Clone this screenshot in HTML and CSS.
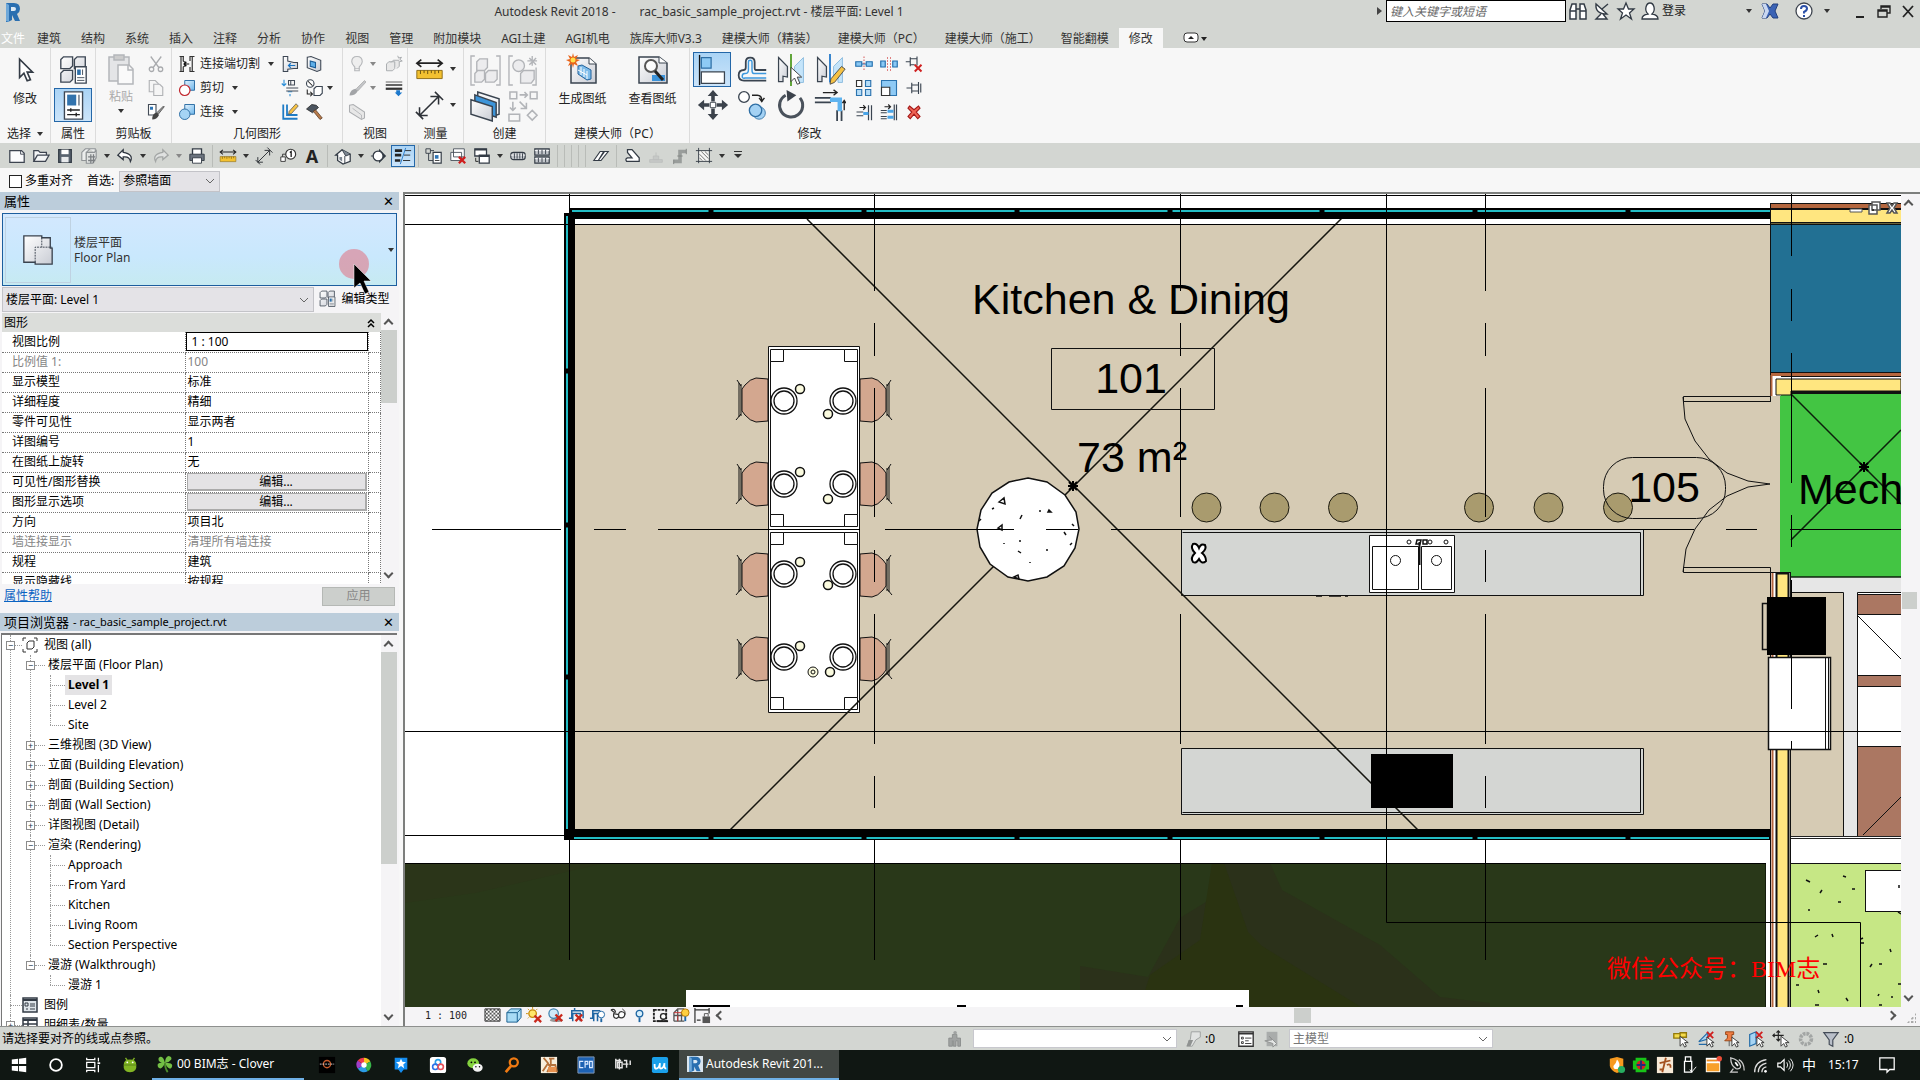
FILE: index.html
```html
<!DOCTYPE html>
<html lang="zh-CN">
<head>
    <meta charset="UTF-8">
    <meta name="viewport" content="width=device-width, initial-scale=1.0">
    <title>Autodesk Revit 2018 - rac_basic_sample_project.rvt</title>
    <link rel="stylesheet" href="styles.css">
</head>

<body>
    <!-- icon sprite -->
    <svg class="sprite" aria-hidden="true">
        <defs>
            <linearGradient id="g-grey" x1="0" y1="0" x2="1" y2="1"><stop offset="0" stop-color="#fff"/><stop offset="1" stop-color="#c9ccd4"/></linearGradient>
            <linearGradient id="g-blue" x1="0" y1="0" x2="1" y2="1"><stop offset="0" stop-color="#e3f3ff"/><stop offset="1" stop-color="#6db6ea"/></linearGradient>
            <pattern id="check" width="4" height="4" patternUnits="userSpaceOnUse"><rect width="4" height="4" fill="#fff"/><path d="M0 0h2v2H0zM2 2h2v2H2z" fill="#555"/></pattern>
        </defs>
        <symbol id="i-revit" viewBox="0 0 16 20"><path d="M1 1h8q6 0 6 6 0 3-3 5l3 7h-5l-3-6v5l-4 2H1z" fill="#2a6fb0"/><path d="M6 5h3q2 0 2 2t-2 2H6z" fill="#dce9f4"/><path d="M1 1l3 2v17l-3-1z" fill="#6ea8d9"/></symbol>
        <symbol id="i-cursor" viewBox="0 0 24 24"><path d="M7 2v17l4-4 3 7 3-1-3-7h5z" fill="#fff" stroke="#333b45" stroke-width="1.5"/></symbol>
        <symbol id="i-types" viewBox="0 0 32 32"><g fill="url(#g-grey)" stroke="#3d4754" stroke-width="1.5"><path d="M2 5l3-3h10v10l-3 3H2zM17 5l3-3h9v10l-3 3h-9zM2 20l3-3h10v10l-3 3H2z"/><path d="M18 13h12v18H18z" fill="#fff"/></g><path d="M20 16h4v6h-4z" fill="#2e6fa8"/><path d="M26 16v6M20 25h8M20 28h8" stroke="#3d4754"/></symbol>
        <symbol id="i-props" viewBox="0 0 32 32"><path d="M6 1h20v30H6z" fill="#fff" stroke="#3d4754" stroke-width="1.5"/><path d="M9 4h10v12H9z" fill="#3273ad"/><path d="M21 4h2v12h-2z" fill="#8a929c"/><path d="M9 21h14M9 26h14M13 19v4M19 24v4" stroke="#222" stroke-width="1.5"/></symbol>
        <symbol id="i-paste" viewBox="0 0 28 32"><g fill="#e4e5e7" stroke="#b4b6ba" stroke-width="1.5"><path d="M2 4h20v24H2z"/><path d="M7 2h10v5H7z" fill="#ccc"/><path d="M11 12h11l4 4v15H11z" fill="#fafafa"/><path d="M21 12v5h5" fill="none"/></g></symbol>
        <symbol id="i-cut" viewBox="0 0 24 24"><g fill="none" stroke="#a9abae" stroke-width="1.7"><path d="M5 2l11 15M19 2L8 17"/><circle cx="6" cy="19" r="3"/><circle cx="18" cy="19" r="3"/></g></symbol>
        <symbol id="i-copy" viewBox="0 0 24 24"><g fill="#f5f5f5" stroke="#b1b3b6" stroke-width="1.5"><path d="M3 2h8l4 4v11H3z"/><path d="M9 7h8l4 4v11H9z"/></g></symbol>
        <symbol id="i-brush" viewBox="0 0 24 24"><path d="M2 2h10v14H2z" fill="#fff" stroke="#444c58" stroke-width="1.5"/><path d="M4 5h4v4H4z" fill="#2e75b5"/><path d="M22 4l-9 9 2 2 8-10z" fill="#999" stroke="#444"/><path d="M13 13q-6 0-6 9 6 0 9-6z" fill="#444"/></symbol>
        <symbol id="i-cope" viewBox="0 0 24 24"><path d="M2 2h6M2 22h6M4 2v20M7 2v6l4 3M7 22v-6l4-3M22 2h-6v6M22 22h-6v-6M19 2v20" fill="none" stroke="#333" stroke-width="1.6"/><path d="M8 12h7M11 9l-3 3 3 3" fill="none" stroke="#111" stroke-width="1.6"/></symbol>
        <symbol id="i-cutgeo" viewBox="0 0 24 24"><path d="M9 2h13v13H9z" fill="url(#g-blue)" stroke="#2f6fa5" stroke-width="1.3"/><circle cx="9" cy="15" r="7" fill="#fff" stroke="#c0262d" stroke-width="1.6"/></symbol>
        <symbol id="i-join" viewBox="0 0 24 24"><path d="M9 2h13v13H9z" fill="url(#g-blue)" stroke="#2f6fa5" stroke-width="1.3"/><circle cx="9" cy="15" r="7" fill="#a5d4f5" stroke="#2f6fa5" stroke-width="1.3"/></symbol>
        <symbol id="i-walljoin" viewBox="0 0 24 24"><path d="M3 2h6v6l8 2h5v8h-5l-8 1v3H3z" fill="url(#g-grey)" stroke="#3c4653" stroke-width="1.4"/><path d="M19 14h-9M13 11l-3 3 3 3" fill="none" stroke="#1573c4" stroke-width="1.6"/></symbol>
        <symbol id="i-opening" viewBox="0 0 24 24"><path d="M3 3l5-1 13 5v13l-5 2L3 17z" fill="url(#g-grey)" stroke="#3c4653" stroke-width="1.4"/><path d="M7 8l7 2v7l-7-2z" fill="#5eaee8" stroke="#185a96" stroke-width="1.4"/></symbol>
        <symbol id="i-beam" viewBox="0 0 24 24"><path d="M4 1v8M1 6l3 3 3-3M12 20v3M9 17h6" stroke="#2d8fd8" stroke-width="1.5" fill="none"/><path d="M10 2h8v6h-8zM13 2v6M7 12h16M7 16h16" stroke="#444c58" fill="none" stroke-width="1.4"/></symbol>
        <symbol id="i-paint" viewBox="0 0 24 24"><g fill="#fff" stroke="#3c4653" stroke-width="1.5"><circle cx="7" cy="6" r="5"/><path d="M12 13l3-3h8v9l-3 3h-8z"/></g><path d="M4 3l6 6M3 14v6h6M7 17l3 3-3 3" stroke="#222" fill="none" stroke-width="1.4"/></symbol>
        <symbol id="i-demo" viewBox="0 0 24 24"><path d="M3 2v19h19M8 2v14h14" stroke="#1f7cc6" stroke-width="2.4" fill="none"/><path d="M20 1l3 3-9 10-4 1 1-4z" fill="#f6c244" stroke="#555"/></symbol>
        <symbol id="i-hammer" viewBox="0 0 24 24"><path d="M2 8l7-6 6 1 3 3-8 7z" fill="#4b545f" stroke="#222"/><path d="M11 11l9 11 3-2-9-11z" fill="#b77a4a" stroke="#5b3a22"/></symbol>
        <symbol id="i-bulb" viewBox="0 0 24 24"><path d="M12 2q7 0 7 7 0 3-4 7v5H9v-5q-4-4-4-7 0-7 7-7z" fill="#eee" stroke="#b5b7ba" stroke-width="1.5"/><path d="M9 18h6" stroke="#b5b7ba"/></symbol>
        <symbol id="i-override" viewBox="0 0 24 24"><g fill="#e8e8e8" stroke="#aaadb0" stroke-width="1.3"><path d="M2 12l3-3h8v9l-3 3H2zM8 10l3-3h8v8l-3 3"/><path d="M17 1l1 3 4-1-2 3 3 2-4 1"/></g></symbol>
        <symbol id="i-brush2" viewBox="0 0 24 24"><path d="M22 2l-11 11 2 3L24 4z" fill="#c3c5c8" stroke="#aaa"/><path d="M10 13q-7 1-8 9 8 0 11-6z" fill="#a2a4a7"/></symbol>
        <symbol id="i-lines" viewBox="0 0 24 24"><path d="M1 4h22" stroke="#333"/><path d="M1 8h22" stroke="#333" stroke-width="2"/><path d="M1 13h22" stroke="#333" stroke-width="3"/><path d="M15 15h5v3h3l-5 5-5-5h2z" fill="#1c78cc"/></symbol>
        <symbol id="i-box" viewBox="0 0 24 24"><path d="M2 3l5-1 15 10v8l-4 2L2 12z" fill="#e7e7e7" stroke="#acaeb1" stroke-width="1.4"/><path d="M6 7l12 9v5" fill="none" stroke="#acaeb1"/></symbol>
        <symbol id="i-measure" viewBox="0 0 32 26"><path d="M2 6h28M7 2L2 6l5 4M25 2l5 4-5 4" fill="none" stroke="#222" stroke-width="1.8"/><path d="M2 14h28v9H2z" fill="#f3c130" stroke="#8a6912"/><path d="M6 14v4M10 14v3M14 14v4M18 14v3M22 14v4M26 14v3" stroke="#5e480c"/></symbol>
        <symbol id="i-dim" viewBox="0 0 32 32"><path d="M5 27L26 6M5 18v9h9M26 15V6h-9M1 23l8 8M22 1l9 9" fill="none" stroke="#2d3137" stroke-width="1.7"/></symbol>
        <symbol id="i-group" viewBox="0 0 32 32"><g fill="#ececee" stroke="#b2b4b8" stroke-width="1.4"><path d="M5 1H1v30h4M27 1h4v30h-4" fill="none"/><path d="M7 7l3-3h8v9l-3 3H7zM5 19l3-3h7v9l-3 3H5zM16 19l3-3h9v9l-3 3h-9z"/></g></symbol>
        <symbol id="i-group2" viewBox="0 0 32 32"><g fill="#ececee" stroke="#b2b4b8" stroke-width="1.4"><path d="M5 1H1v30h4M29 13v18h-4" fill="none"/><circle cx="11" cy="11" r="6"/><path d="M13 19l3-3h11v9l-3 4H13z"/><path d="M25 1v10M20 6h10M22 3l7 7M29 3l-7 7"/></g></symbol>
        <symbol id="i-assembly" viewBox="0 0 32 32"><g stroke="#3a4450" stroke-width="1.5"><path d="M8 1l22 7v16l-3 1L8 12z" fill="#f5f6f8"/><path d="M5 4l22 8v15L5 19z" fill="#3d95da"/><path d="M1 9l22 7v15L1 24z" fill="url(#g-grey)"/></g></symbol>
        <symbol id="i-similar" viewBox="0 0 32 32"><g fill="none" stroke="#b2b4b8" stroke-width="1.6"><path d="M2 1h7v7H2zM23 1h7v7h-7zM1 24h11v7H1zM25 20l5 5-5 5-5-5zM12 4h8M17 1l3 3-3 3M5 11v9M2 17l3 3 3-3M12 11l7 7M19 12v6h-6"/></g></symbol>
        <symbol id="i-sheet" viewBox="0 0 32 32"><path d="M5 5h18l7 6v19H5z" fill="url(#g-grey)" stroke="#3a4450" stroke-width="1.5"/><path d="M23 5v6h7" fill="#fff" stroke="#3a4450"/><path d="M12 13l4-1 9 5v9l-4 1-9-6z" fill="#7dbbe9" stroke="#22629c"/><path d="M15 14v8M18 16v8M21 18v8M12 17l9 5" stroke="#fff"/><path d="M7 0l1 4 4-2-2 4 4 1-4 2 2 4-4-2-1 4-1-4-4 2 2-4-4-2 4-1-2-4 4 2z" fill="#e8641b"/><circle cx="7" cy="7" r="2.5" fill="#ffdf4b"/></symbol>
        <symbol id="i-viewsheet" viewBox="0 0 32 32"><path d="M2 4h20l8 6v20H2z" fill="url(#g-grey)" stroke="#3a4450" stroke-width="1.5"/><path d="M22 4v6h8" fill="#fff" stroke="#3a4450"/><path d="M15 22h13v6H15z" fill="#3b93da"/><circle cx="14" cy="13" r="6" fill="#fff" fill-opacity=".8" stroke="#555" stroke-width="2"/><path d="M18 18l8 9" stroke="#222" stroke-width="3"/></symbol>
        <symbol id="i-align" viewBox="0 0 36 36"><path d="M4 1v34" stroke="#111" stroke-width="1.5"/><path d="M6 4h11v12H6z" fill="#8ecaf5" stroke="#2f6fa5" stroke-width="1.4"/><path d="M6 20h26v13H6z" fill="#fff" stroke="#3a4450" stroke-width="1.4"/></symbol>
        <symbol id="i-offset" viewBox="0 0 36 36"><g fill="none" stroke="#3a4450"><path d="M34 18H22q-1 0-1-3V9q0-5-5-5t-5 5v6q0 3-2 3-6 0-6 6t6 6h25" stroke-width="2"/><path d="M34 22H20q-2 0-2-4V9q0-2-2-2t-2 2v9q0 4-4 4-3 0-3 3t3 2h24" stroke="#3c98de" stroke-width="1.6"/></g></symbol>
        <symbol id="i-mirror1" viewBox="0 0 36 36"><path d="M4 4l10 10v12L9 25v6H4z" fill="url(#g-grey)" stroke="#3a4450" stroke-width="1.4"/><path d="M32 4L22 14v12h5v6h5z" fill="#c4e4fa" stroke="#86b9dd"/><path d="M18 0v36" stroke="#4f9c23" stroke-width="2"/><path d="M18 15v16l4-4 3 7 3-1-3-7h5z" fill="#fff" stroke="#333"/></symbol>
        <symbol id="i-mirror2" viewBox="0 0 36 36"><path d="M4 4l10 10v12L9 25v6H4z" fill="url(#g-grey)" stroke="#3a4450" stroke-width="1.4"/><path d="M32 4L22 14v12h5v6h5z" fill="#c4e4fa" stroke="#86b9dd"/><path d="M18 0v32" stroke="#2278c8" stroke-width="2"/><path d="M31 14l4 3-12 15-5 2 1-6z" fill="#f6c244" stroke="#444"/></symbol>
        <symbol id="i-move" viewBox="0 0 36 36"><path d="M18 1l6 7h-4v6h-4V8h-4zM18 35l6-7h-4v-6h-4v6h-4zM1 18l7-6v4h6v4H8v4zM35 18l-7-6v4h-6v4h6v4z" fill="#3b424b"/><path d="M15 15h6v6h-6z" fill="#fff" stroke="#3b424b"/></symbol>
        <symbol id="i-copy2" viewBox="0 0 36 36"><circle cx="9" cy="9" r="6" fill="#fff" stroke="#3a4450" stroke-width="1.5"/><path d="M18 7h6q5 0 5 6M26 10l3 4 3-4" fill="none" stroke="#222" stroke-width="1.6"/><circle cx="26" cy="27" r="7" fill="#a4d2f4" stroke="#3a77a8"/><circle cx="22" cy="24" r="7" fill="#a4d2f4" stroke="#2f6fa5" stroke-width="1.5"/></symbol>
        <symbol id="i-rotate" viewBox="0 0 36 36"><path d="M12 7A13 13 0 1 0 28 10" fill="none" stroke="#4a525c" stroke-width="3.4"/><path d="M13 1l11 6-10 7z" fill="#3b424b"/></symbol>
        <symbol id="i-trim" viewBox="0 0 36 36"><path d="M1 10h18M1 15h18M26 24v12M31 24v12" stroke="#3a4450" stroke-width="2"/><path d="M18 12h11v13" fill="none" stroke="#5eb3ef" stroke-width="5"/><path d="M10 4h16M22 1l4 3-4 3M34 24v-10M32 16l2-3 2 3" fill="none" stroke="#222" stroke-width="1.5"/></symbol>
        <symbol id="i-split" viewBox="0 0 24 24"><path d="M1 9h8v6H1zM15 9h8v6h-8zM9 12h6" fill="#8ac8f4" stroke="#1f6dac" stroke-width="1.5"/><path d="M12 2v20" stroke="#c22" stroke-dasharray="2 2"/></symbol>
        <symbol id="i-split2" viewBox="0 0 24 24"><path d="M1 8h6v8H1zM17 8h6v8h-6z" fill="#8ac8f4" stroke="#1f6dac" stroke-width="1.5"/><path d="M10 3v18M14 3v18" stroke="#c22" stroke-dasharray="2 2"/></symbol>
        <symbol id="i-pin" viewBox="0 0 24 24"><path d="M2 12h7M9 5v14M9 8h9M9 16h9M18 4v16M21 6v12" fill="none" stroke="#3a4450" stroke-width="1.5"/></symbol>
        <symbol id="i-unpin" viewBox="0 0 24 24"><path d="M1 9h6M7 3v12M7 5h9M7 13h6M16 2v12" fill="none" stroke="#3a4450" stroke-width="1.5"/><path d="M13 13l9 9M22 13l-9 9" stroke="#cf2020" stroke-width="2.6"/></symbol>
        <symbol id="i-array" viewBox="0 0 24 24"><g stroke="#2b73ae" stroke-width="1.5" fill="#b6ddf8"><path d="M2 2h7v8H2z" fill="#fff" stroke="#333"/><path d="M14 2h7v8h-7zM2 14h7v8H2zM14 14h7v8h-7z"/></g></symbol>
        <symbol id="i-scale" viewBox="0 0 24 24"><path d="M2 2h20v20H2z" fill="#8ecaf5" stroke="#2b73ae" stroke-width="1.5"/><path d="M2 11h11v11H2z" fill="#fff" stroke="#333" stroke-width="1.5"/></symbol>
        <symbol id="i-extend" viewBox="0 0 24 24"><path d="M2 12h9M2 17h9M18 3v20M22 3v20" stroke="#3a4450" stroke-width="1.6"/><path d="M11 14h7" stroke="#4aa5e8" stroke-width="4"/><path d="M6 6h8M11 3l3 3-3 3" fill="none" stroke="#222" stroke-width="1.5"/></symbol>
        <symbol id="i-extend2" viewBox="0 0 24 24"><path d="M1 10h8M1 13h8M1 18h8M1 21h8M19 2v21M22 2v21" stroke="#3a4450" stroke-width="1.6"/><path d="M10 11h8M10 19h8" stroke="#4aa5e8" stroke-width="4"/><path d="M6 5h8M11 2l3 3-3 3" fill="none" stroke="#222" stroke-width="1.5"/></symbol>
        <symbol id="i-delete" viewBox="0 0 24 24"><path d="M6 4l6 5 6-5 2 3-5 5 5 6-3 3-5-6-5 6-3-3 5-6-5-5z" fill="#f06455" stroke="#a31818" stroke-width="1.5"/></symbol>
        <!-- quick access -->
        <symbol id="q-new" viewBox="0 0 20 20"><path d="M2 4h13l3 3v10H2z" fill="#fbfbfd" stroke="#3d4450" stroke-width="1.4"/><path d="M14 4v4h4" fill="none" stroke="#3d4450"/></symbol>
        <symbol id="q-open" viewBox="0 0 20 20"><path d="M2 16V4h5l2 2h7v3M2 16l4-7h13l-4 7z" fill="#f4f5f6" stroke="#3d4450" stroke-width="1.4"/></symbol>
        <symbol id="q-save" viewBox="0 0 20 20"><path d="M3 3h14v14H3z" fill="#59636f" stroke="#333b45" stroke-width="1.4"/><path d="M6 3h8v5H6z" fill="#fff"/><path d="M6 11h8v6H6z" fill="#e8eaec"/></symbol>
        <symbol id="q-sync" viewBox="0 0 20 20"><path d="M2 6l4-4h5l-4 4v9H2zM11 2h6v5" fill="#eceeed" stroke="#8f9396" stroke-width="1.2"/><path d="M7 6h9l2-2v8l-4 6H7z" fill="#e1e3e2" stroke="#8f9396" stroke-width="1.2"/><path d="M12 8v10M9 11h8M9 15h8M15 8v10" stroke="#7b7f82" stroke-width="1.4"/></symbol>
        <symbol id="q-undo" viewBox="0 0 20 20"><path d="M8 3L2 9l6 5v-3q7-1 8 5 4-8-8-10z" fill="#fff" stroke="#2f3640" stroke-width="1.4"/></symbol>
        <symbol id="q-redo" viewBox="0 0 20 20"><path d="M12 3l6 6-6 5v-3q-7-1-8 5-4-8 8-10z" fill="#dfe1e0" stroke="#a3a6a5" stroke-width="1.4"/></symbol>
        <symbol id="q-print" viewBox="0 0 20 20"><path d="M5 8V2h10v6" fill="#fff" stroke="#333b45" stroke-width="1.5"/><path d="M2 8h16v7H2z" fill="#6b737e" stroke="#333b45"/><path d="M5 12h10v6H5z" fill="#fff" stroke="#333b45"/></symbol>
        <symbol id="q-tag" viewBox="0 0 20 20"><path d="M2 11h5v5H2z" fill="#fff" stroke="#333"/><path d="M4 11V8h4" fill="none" stroke="#333"/><circle cx="13" cy="8" r="5.5" fill="#fff" stroke="#333" stroke-width="1.3"/><path d="M12 6l1.500-1v6" fill="none" stroke="#111" stroke-width="1.4"/></symbol>
        <symbol id="q-house" viewBox="0 0 20 20"><path d="M2 9l7-6 9 5v8l-8 3-6-4v-6z" fill="#fafafa" stroke="#333b45" stroke-width="1.4"/><path d="M9 3l9 5-5 2z" fill="#7d8792"/><path d="M12 10v8M9 3l4 7 5-2" stroke="#333b45" fill="none"/><path d="M6 11h3v5l-3-2z" fill="#7d8792"/></symbol>
        <symbol id="q-section" viewBox="0 0 20 20"><path d="M10 2l8 8-8 8z" fill="#333b45"/><circle cx="9" cy="10" r="5.500" fill="#fff" stroke="#333b45" stroke-width="1.4"/><path d="M1 10h3" stroke="#333b45"/></symbol>
        <symbol id="q-thin" viewBox="0 0 20 20"><path d="M1 4h8M1 9h7M1 15h6" stroke="#222" stroke-width="3"/><path d="M12 4h7M11 9h7M10 15h8" stroke="#222"/><path d="M13 1L7 19" stroke="#2278c8"/></symbol>
        <symbol id="q-wins" viewBox="0 0 20 20"><path d="M1 2h5v5H1zM4 7v8h5M6 4h4" fill="none" stroke="#333b45"/><path d="M9 6h9v12H9z" fill="#fff" stroke="#333b45" stroke-width="1.3"/><path d="M11 9h4v4h-4z" fill="#2e75b5"/><path d="M11 15h5" stroke="#333"/></symbol>
        <symbol id="q-close" viewBox="0 0 20 20"><g fill="#fff" stroke="#4a515b"><path d="M5 2h12v9H5zM2 6h12v9H2z"/></g><path d="M11 11l7 7M18 11l-7 7" stroke="#cf1d1d" stroke-width="2.500"/></symbol>
        <symbol id="q-switch" viewBox="0 0 20 20"><path d="M2 2h13v8H2z" fill="#fff" stroke="#333b45" stroke-width="1.4"/><path d="M7 9h11v9H7z" fill="#fff" stroke="#333b45" stroke-width="1.4"/><path d="M7 10h11M2 3h13" stroke="#333b45" stroke-width="2"/><path d="M3 12v4h3" fill="none" stroke="#222"/></symbol>
        <symbol id="q-pipe" viewBox="0 0 20 20"><rect x="2" y="6" width="16" height="8" rx="3" fill="#c4c8cd" stroke="#333b45" stroke-width="1.3"/><path d="M2 9h16" stroke="#fff"/><path d="M6 7v6M9 7v6M12 7v6M15 7v6" stroke="#333b45"/></symbol>
        <symbol id="q-pipes" viewBox="0 0 20 20"><path d="M2 2h16v7H2zM2 11h16v7H2z" fill="#c4c8cd" stroke="#333b45" stroke-width="1.3"/><path d="M2 4h16M2 13h16" stroke="#fff"/><path d="M6 3v5M10 3v5M14 3v5M6 12v5M10 12v5M14 12v5" stroke="#333b45"/></symbol>
        <symbol id="q-duct" viewBox="0 0 20 20"><path d="M2 15L9 5h4L7 15zM7 15h3L18 5h-4z" fill="#fff" stroke="#333b45" stroke-width="1.3"/></symbol>
        <symbol id="q-elbow" viewBox="0 0 20 20"><path d="M5 3h5l8 9v4H4q-2-3 1-4h5L5 6z" fill="#fff" stroke="#333b45" stroke-width="1.4"/></symbol>
        <symbol id="q-tee" viewBox="0 0 20 20"><path d="M3 14h14v3H3zM7 10h6v4H7zM10 6v4" fill="#c6c9c7" stroke="#bcbfbd"/></symbol>
        <symbol id="q-flex" viewBox="0 0 20 20"><path d="M3 16h7V5h7" fill="none" stroke="#999d9b" stroke-width="4"/><path d="M3 14v5M17 2v6M7 10h6" stroke="#7f8381"/></symbol>
        <symbol id="q-region" viewBox="0 0 20 20"><path d="M4 1v17M16 1v17M1 4h18M1 16h18" stroke="#333b45"/><path d="M5 5h10v10H5z" fill="#f6f6f6"/><path d="M5 8l7 7M5 12l3 3M7 5l8 8M11 5l4 4" stroke="#666"/></symbol>
        <!-- title bar -->
        <symbol id="t-bino" viewBox="0 0 20 20"><path d="M2 9l2-6h4v15H2zM18 9l-2-6h-4v15h6zM8 8h4M2 10h6M12 10h6" fill="#fff" stroke="#333b45" stroke-width="1.5"/></symbol>
        <symbol id="t-dish" viewBox="0 0 20 20"><path d="M4 3q-1 10 11 10zM9 13l-5 5h11l-4-5M10 8l6-5" fill="#fff" stroke="#333b45" stroke-width="1.4"/></symbol>
        <symbol id="t-star" viewBox="0 0 20 20"><path d="M10 2l2.500 6H18l-4.500 4 2 6-5.500-4-5.500 4 2-6L2 8h5.500z" fill="#fff" stroke="#333b45" stroke-width="1.3"/></symbol>
        <symbol id="t-user" viewBox="0 0 20 20"><path d="M2 18q0-4 6-5-3-3-2-7 1-4 4-4t4 4q1 4-2 7 6 1 6 5z" fill="#fff" stroke="#333b45" stroke-width="1.3"/></symbol>
        <symbol id="t-x" viewBox="0 0 20 20"><path d="M2 3h5l3 4 3-4h5l-3 7 3 7h-5l-3-4-3 4H2l3-7z" fill="#3b63b5" stroke="#23407d"/><path d="M2 3h4l3 7-3 7H2l3-7z" fill="#c9d7f0"/></symbol>
        <symbol id="t-help" viewBox="0 0 20 20"><circle cx="10" cy="10" r="8" fill="#fff" stroke="#3f4650" stroke-width="1.3"/><path d="M7 8q0-3 3-3t3 2.500q0 2-3 3.500v1.500M10 14v2" fill="none" stroke="#2b50a8" stroke-width="2"/></symbol>
        <!-- view control bar -->
        <symbol id="v-detail" viewBox="0 0 18 18"><path d="M1 2h16v13H1z" fill="url(#check)" stroke="#333"/></symbol>
        <symbol id="v-cube" viewBox="0 0 18 18"><path d="M2 6l4-4h11v9l-4 5H2z" fill="#a8dbf5" stroke="#175e8e"/><path d="M2 6h11v10M13 6l4-4" fill="none" stroke="#175e8e"/></symbol>
        <symbol id="v-sun" viewBox="0 0 18 18"><circle cx="7" cy="7" r="4" fill="#ffe76b" stroke="#c78a0a" stroke-width="1.4"/><path d="M7 0v2M0 7h2M2 2l1 1M2 12l1-1M12 2l-1 1" stroke="#c78a0a"/><path d="M9 9l7 7M16 9l-7 7" stroke="#c9281c" stroke-width="2.400"/></symbol>
        <symbol id="v-shadow" viewBox="0 0 18 18"><ellipse cx="10" cy="14" rx="7" ry="2" fill="#999"/><circle cx="7" cy="7" r="5" fill="#cfeafa" stroke="#3d80ad" stroke-width="1.300"/><path d="M9 8l7 7M16 8l-7 7" stroke="#c9281c" stroke-width="2.400"/></symbol>
        <symbol id="v-crop" viewBox="0 0 18 18"><path d="M1 12h3V4h12M5 15V7h8v8M7 1v3M16 4v8" fill="none" stroke="#1f66a3" stroke-width="1.600"/><path d="M8 8l7 7M15 8l-7 7" stroke="#c9281c" stroke-width="2.400"/></symbol>
        <symbol id="v-cropshow" viewBox="0 0 18 18"><path d="M1 12h3V4h8M5 15V7h4v8" fill="none" stroke="#1f66a3" stroke-width="1.600"/><circle cx="13" cy="8" r="3.500" fill="#fff" stroke="#1f66a3"/><path d="M12 12h2v4h-2z" fill="#1f66a3"/></symbol>
        <symbol id="v-glasses" viewBox="0 0 18 18"><path d="M1 3l4 3M1 3q4-2 5 3M4 7q-1 5 3 5 3-1 2-4zM9 8q1-4 4-3 4 1 2 5-3 3-6 0" fill="#fff" stroke="#333" stroke-width="1.300"/><path d="M16 8q1-4-3-6" fill="none" stroke="#333"/></symbol>
        <symbol id="v-bulb" viewBox="0 0 18 18"><circle cx="9" cy="7" r="3.500" fill="#d8effc" stroke="#1f66a3" stroke-width="1.400"/><path d="M8 11h2v5H8z" fill="#1f66a3"/></symbol>
        <symbol id="v-temp" viewBox="0 0 18 18"><path d="M2 3h13v12H2z" fill="none" stroke="#222" stroke-width="2" stroke-dasharray="3 1"/><circle cx="12" cy="10" r="3" fill="#fff" stroke="#222" stroke-width="1.400"/><path d="M5 15h12" stroke="#222" stroke-width="2"/></symbol>
        <symbol id="v-ana" viewBox="0 0 18 18"><path d="M1 15V6l4-4h7M5 2v13M1 9h10M9 5v10M1 15h11" fill="none" stroke="#555" stroke-width="1.400"/><path d="M1 6h8M5 9v6" stroke="#c33"/><circle cx="13" cy="6" r="4" fill="#ffcf40" stroke="#b57600"/><path d="M12 10h2v5h-2z" fill="#1f66a3"/></symbol>
        <symbol id="v-lock" viewBox="0 0 18 18"><path d="M1 1v16M16 1v6M1 3h15M3 14h4" stroke="#333" stroke-width="1.300" fill="none"/><path d="M9 10h8v7H9z" fill="#555"/><path d="M11 10V7h4v3" fill="none" stroke="#555"/></symbol>
        <!-- status bar -->
        <symbol id="s-people" viewBox="0 0 20 20"><path d="M2 18V9h4V5h5v4h4v9h-3v-6h-2v6H7v-6H6v6z" fill="#9fa2a1" stroke="#8a8d8c"/><circle cx="9" cy="3" r="2" fill="#9fa2a1"/></symbol>
        <symbol id="s-edit" viewBox="0 0 20 20"><path d="M7 2h10v6l-5 3-4 7H2l4-8z" fill="#e1e3e2" stroke="#9b9e9d"/><path d="M4 11h5l-3 7H2z" fill="#8f9291"/></symbol>
        <symbol id="s-opt" viewBox="0 0 20 20"><path d="M2 2h16v16H2z" fill="#fff" stroke="#333" stroke-width="1.5"/><path d="M2 4h16" stroke="#333" stroke-width="2"/><path d="M5 8h2v2H5zM5 13h2v2H5zM9 9h7M9 12h4M9 15h7" stroke="#333" fill="none"/></symbol>
        <symbol id="s-add" viewBox="0 0 20 20"><path d="M4 2h12v16H4z" fill="#a9acab"/><path d="M2 12l8-1-3-4 8 8-4 4v-4z" fill="#e4e6e5" stroke="#8d908f"/></symbol>
        <symbol id="s-link" viewBox="0 0 20 20"><path d="M2 4h7v5H2zM9 3h7v5H9z" fill="#f4dc4d" stroke="#93790a" stroke-width="1.500"/><path d="M9 7v11l3-3 2 4 2-1-2-4h4z" fill="#fff" stroke="#333"/></symbol>
        <symbol id="s-under" viewBox="0 0 20 20"><path d="M2 13L12 3v7zM2 16h12" fill="#a7d4f3" stroke="#226aa7" stroke-width="1.300"/><path d="M11 2l7 7M18 2l-7 7" stroke="#cf1d1d" stroke-width="2"/><path d="M11 8v10l3-3 2 4 2-1-2-4h3z" fill="#fff" stroke="#333"/></symbol>
        <symbol id="s-pin" viewBox="0 0 20 20"><path d="M4 2h9v3h-2v4l3 3H3l3-3V5H4z" fill="#ef7c43" stroke="#94400f"/><path d="M8 12v6" stroke="#555"/><path d="M11 8v10l3-3 2 4 2-1-2-4h3z" fill="#fff" stroke="#333"/></symbol>
        <symbol id="s-face" viewBox="0 0 20 20"><path d="M3 5l7-3v13l-7 3z" fill="#a7d4f3" stroke="#226aa7" stroke-width="1.300"/><path d="M10 2l7 7M17 2l-7 7" stroke="#cf1d1d" stroke-width="2"/><path d="M11 8v10l3-3 2 4 2-1-2-4h3z" fill="#fff" stroke="#333"/></symbol>
        <symbol id="s-drag" viewBox="0 0 20 20"><path d="M7 1v11M1 6h12M5 3l2-2 2 2M3 4L1 6l2 2M5 10l2 2 2-2" fill="none" stroke="#222" stroke-width="1.300"/><path d="M10 7v11l3-3 2 4 2-1-2-4h4z" fill="#fff" stroke="#333"/></symbol>
        <symbol id="s-bg" viewBox="0 0 20 20"><circle cx="10" cy="10" r="6" fill="none" stroke="#a2a5a4" stroke-width="4" stroke-dasharray="3 1"/></symbol>
        <symbol id="s-filter" viewBox="0 0 20 20"><path d="M2 3h16l-6 8v7l-4-2v-5z" fill="#b9bfc9" stroke="#444c58" stroke-width="1.300"/></symbol>
    </svg>

    <header class="titlebar">
        <svg class="logo"><use href="#i-revit"/></svg>
        <h1 class="title"><span>Autodesk Revit 2018 -</span><span>rac_basic_sample_project.rvt - 楼层平面: Level 1</span></h1>
        <div class="infocenter">
            <button class="caret-right" aria-label="展开"></button>
            <input class="search" type="text" placeholder="键入关键字或短语" aria-label="搜索">
            <button aria-label="查找"><svg><use href="#t-bino"/></svg></button>
            <button aria-label="通讯中心"><svg><use href="#t-dish"/></svg></button>
            <button aria-label="收藏夹"><svg><use href="#t-star"/></svg></button>
            <button class="login"><svg><use href="#t-user"/></svg>登录</button>
            <i class="caret"></i>
            <button class="exchange" aria-label="Exchange"><svg><use href="#t-x"/></svg></button>
            <button class="help" aria-label="帮助"><svg><use href="#t-help"/></svg></button>
            <i class="caret"></i>
        </div>
        <div class="winbtns">
            <button aria-label="最小化"><svg viewBox="0 0 16 16"><path d="M4 13h8" stroke="#222" stroke-width="2"/></svg></button>
            <button aria-label="还原"><svg viewBox="0 0 16 16"><path d="M5 5V2h9v7h-3M2 6h9v7H2zM2 7h9M5 3h9" fill="none" stroke="#222" stroke-width="1.400"/></svg></button>
            <button aria-label="关闭"><svg viewBox="0 0 16 16"><path d="M3 2l10 11M13 2L3 13" stroke="#222" stroke-width="1.800"/></svg></button>
        </div>
    </header>

    <nav class="tabs">
        <a class="file" href="#">文件</a>
        <a href="#">建筑</a><a href="#">结构</a><a href="#">系统</a><a href="#">插入</a><a href="#">注释</a><a href="#">分析</a><a href="#">协作</a><a href="#">视图</a><a href="#">管理</a><a href="#">附加模块</a><a href="#">AGI土建</a><a href="#">AGI机电</a><a href="#">族库大师V3.3</a><a href="#">建模大师（精装）</a><a href="#">建模大师（PC）</a><a href="#">建模大师（施工）</a><a href="#">智能翻模</a><a class="active" href="#">修改</a>
        <button class="tab-toggle" aria-label="最小化功能区"><svg viewBox="0 0 24 14"><rect x="1" y="2" width="14" height="9" rx="3" fill="#fff" stroke="#333"/><path d="M5 8h6l-3-3z" fill="#222"/><path d="M18 6h6l-3 4z" fill="#222"/></svg></button>
    </nav>

    <section class="ribbon">
        <div class="panel p-select">
            <div class="tools"><button class="big"><svg><use href="#i-cursor"/></svg>修改</button></div>
            <h2>选择 <i class="caret"></i></h2>
        </div>
        <div class="panel p-props">
            <div class="tools stack">
                <button aria-label="类型属性"><svg class="i28"><use href="#i-types"/></svg></button>
                <button class="on" aria-label="属性"><svg class="i28"><use href="#i-props"/></svg></button>
            </div>
            <h2>属性</h2>
        </div>
        <div class="panel p-clip">
            <div class="tools">
                <button class="big off"><svg><use href="#i-paste"/></svg>粘贴<i class="caret"></i></button>
                <div class="col">
                    <button aria-label="剪切"><svg><use href="#i-cut"/></svg></button>
                    <button aria-label="复制"><svg><use href="#i-copy"/></svg></button>
                    <button aria-label="匹配类型"><svg><use href="#i-brush"/></svg></button>
                </div>
            </div>
            <h2>剪贴板</h2>
        </div>
        <div class="panel p-geo">
            <div class="tools">
                <div class="col wide">
                    <button><svg><use href="#i-cope"/></svg>连接端切割<i class="caret"></i></button>
                    <button><svg><use href="#i-cutgeo"/></svg>剪切<i class="caret"></i></button>
                    <button><svg><use href="#i-join"/></svg>连接<i class="caret"></i></button>
                </div>
                <div class="col">
                    <button aria-label="墙连接"><svg><use href="#i-walljoin"/></svg></button>
                    <button aria-label="梁连接"><svg><use href="#i-beam"/></svg></button>
                    <button aria-label="拆分面"><svg><use href="#i-demo"/></svg></button>
                </div>
                <div class="col">
                    <button aria-label="洞口"><svg><use href="#i-opening"/></svg></button>
                    <button aria-label="填色"><svg><use href="#i-paint"/></svg><i class="caret"></i></button>
                    <button aria-label="拆除"><svg><use href="#i-hammer"/></svg></button>
                </div>
            </div>
            <h2>几何图形</h2>
        </div>
        <div class="panel p-view">
            <div class="tools">
                <div class="col">
                    <button aria-label="隐藏"><svg><use href="#i-bulb"/></svg><i class="caret dim"></i></button>
                    <button aria-label="替换"><svg><use href="#i-brush2"/></svg><i class="caret dim"></i></button>
                    <button aria-label="选择框"><svg><use href="#i-box"/></svg></button>
                </div>
                <div class="col">
                    <button aria-label="置换"><svg><use href="#i-override"/></svg></button>
                    <button aria-label="线处理"><svg><use href="#i-lines"/></svg></button>
                </div>
            </div>
            <h2>视图</h2>
        </div>
        <div class="panel p-measure">
            <div class="tools stack">
                <button aria-label="测量"><svg class="i28"><use href="#i-measure"/></svg><i class="caret"></i></button>
                <button aria-label="尺寸标注"><svg class="i28"><use href="#i-dim"/></svg><i class="caret"></i></button>
            </div>
            <h2>测量</h2>
        </div>
        <div class="panel p-create">
            <div class="tools quad">
                <button aria-label="创建组"><svg class="i30"><use href="#i-group"/></svg></button>
                <button aria-label="创建部件"><svg class="i30"><use href="#i-group2"/></svg></button>
                <button aria-label="创建零件"><svg class="i30"><use href="#i-assembly"/></svg></button>
                <button aria-label="创建类似"><svg class="i30"><use href="#i-similar"/></svg></button>
            </div>
            <h2>创建</h2>
        </div>
        <div class="panel p-master">
            <div class="tools">
                <button class="big"><svg><use href="#i-sheet"/></svg>生成图纸</button>
                <button class="big"><svg><use href="#i-viewsheet"/></svg>查看图纸</button>
            </div>
            <h2>建模大师（PC）</h2>
        </div>
        <div class="panel p-modify">
            <div class="tools">
                <div class="eight">
                    <button class="on" aria-label="对齐"><svg><use href="#i-align"/></svg></button>
                    <button aria-label="偏移"><svg><use href="#i-offset"/></svg></button>
                    <button aria-label="镜像拾取轴"><svg><use href="#i-mirror1"/></svg></button>
                    <button aria-label="镜像绘制轴"><svg><use href="#i-mirror2"/></svg></button>
                    <button aria-label="移动"><svg><use href="#i-move"/></svg></button>
                    <button aria-label="复制"><svg><use href="#i-copy2"/></svg></button>
                    <button aria-label="旋转"><svg><use href="#i-rotate"/></svg></button>
                    <button aria-label="修剪"><svg><use href="#i-trim"/></svg></button>
                </div>
                <div class="nine">
                    <button aria-label="拆分图元"><svg><use href="#i-split"/></svg></button>
                    <button aria-label="用间隙拆分"><svg><use href="#i-split2"/></svg></button>
                    <button aria-label="解锁"><svg><use href="#i-unpin"/></svg></button>
                    <button aria-label="阵列"><svg><use href="#i-array"/></svg></button>
                    <button aria-label="缩放"><svg><use href="#i-scale"/></svg></button>
                    <button aria-label="锁定"><svg><use href="#i-pin"/></svg></button>
                    <button aria-label="延伸单个"><svg><use href="#i-extend"/></svg></button>
                    <button aria-label="延伸多个"><svg><use href="#i-extend2"/></svg></button>
                    <button aria-label="删除"><svg><use href="#i-delete"/></svg></button>
                </div>
            </div>
            <h2>修改</h2>
        </div>
    </section>

    <div class="qat">
        <button aria-label="新建"><svg><use href="#q-new"/></svg></button>
        <button aria-label="打开"><svg><use href="#q-open"/></svg></button>
        <button aria-label="保存"><svg><use href="#q-save"/></svg></button>
        <button aria-label="同步"><svg><use href="#q-sync"/></svg></button><i class="caret"></i>
        <button aria-label="放弃"><svg><use href="#q-undo"/></svg></button><i class="caret"></i>
        <button aria-label="重做"><svg><use href="#q-redo"/></svg></button><i class="caret dim"></i>
        <button aria-label="打印"><svg><use href="#q-print"/></svg></button>
        <span class="sep"></span>
        <button aria-label="测量"><svg><use href="#i-measure"/></svg></button><i class="caret"></i>
        <button aria-label="对齐尺寸标注"><svg><use href="#i-dim"/></svg></button>
        <button aria-label="标记"><svg><use href="#q-tag"/></svg></button>
        <button class="letter">A</button>
        <span class="sep"></span>
        <button aria-label="三维视图"><svg><use href="#q-house"/></svg></button><i class="caret"></i>
        <button aria-label="剖面"><svg><use href="#q-section"/></svg></button>
        <button class="on" aria-label="细线"><svg><use href="#q-thin"/></svg></button>
        <span class="sep"></span>
        <button aria-label="用户界面"><svg><use href="#q-wins"/></svg></button>
        <button aria-label="关闭隐藏窗口"><svg><use href="#q-close"/></svg></button>
        <button aria-label="切换窗口"><svg><use href="#q-switch"/></svg></button><i class="caret"></i>
        <button aria-label="管道"><svg><use href="#q-pipe"/></svg></button>
        <button aria-label="平行管道"><svg><use href="#q-pipes"/></svg></button>
        <span class="sep"></span><span class="sep"></span><span class="sep"></span><span class="sep"></span><span class="sep"></span>
        <button aria-label="风管"><svg><use href="#q-duct"/></svg></button>
        <span class="sep"></span>
        <button aria-label="弯头"><svg><use href="#q-elbow"/></svg></button>
        <button aria-label="三通"><svg><use href="#q-tee"/></svg></button>
        <button aria-label="软管"><svg><use href="#q-flex"/></svg></button>
        <button aria-label="区域"><svg><use href="#q-region"/></svg></button><i class="caret"></i>
        <button class="more" aria-label="自定义"><i class="caret"></i></button>
    </div>

    <div class="options">
        <label><input type="checkbox">多重对齐</label>
        <label for="prefer">首选:</label>
        <select id="prefer"><option>参照墙面</option></select>
    </div>

    <main>
        <aside>
            <section class="props">
                <h3>属性<button aria-label="关闭属性">✕</button></h3>
                <button class="type-selector">
                    <span class="thumb"><svg viewBox="0 0 36 36"><path d="M3 3h19v2h9v11h2v17H15v-2H3z" fill="url(#g-grey)" stroke="#39424e" stroke-width="1.400"/><path d="M22 5v10M15 31V15h18" fill="none" stroke="#39424e" stroke-dasharray="2 1"/></svg></span>
                    <span class="type-name">楼层平面<br>Floor Plan</span>
                    <i class="caret"></i>
                </button>
                <div class="instance">
                    <select aria-label="实例"><option>楼层平面: Level 1</option></select>
                    <button><svg><use href="#i-types"/></svg>编辑类型</button>
                </div>
                <div class="plist">
                    <div class="prows">
                        <div class="group">图形<svg viewBox="0 0 8 10"><path d="M1 5l3-3 3 3M1 9l3-3 3 3" fill="none" stroke="#000" stroke-width="1.500"/></svg></div>
                        <table>
                            <tr><th>视图比例</th><td><input type="text" value="1 : 100" aria-label="视图比例"></td><td></td></tr>
                            <tr class="dim"><th>比例值 1:</th><td>100</td><td></td></tr>
                            <tr><th>显示模型</th><td>标准</td><td></td></tr>
                            <tr><th>详细程度</th><td>精细</td><td></td></tr>
                            <tr><th>零件可见性</th><td>显示两者</td><td></td></tr>
                            <tr><th>详图编号</th><td>1</td><td></td></tr>
                            <tr><th>在图纸上旋转</th><td>无</td><td></td></tr>
                            <tr><th>可见性/图形替换</th><td><button>编辑...</button></td><td></td></tr>
                            <tr><th>图形显示选项</th><td><button>编辑...</button></td><td></td></tr>
                            <tr><th>方向</th><td>项目北</td><td></td></tr>
                            <tr class="dim"><th>墙连接显示</th><td>清理所有墙连接</td><td></td></tr>
                            <tr><th>规程</th><td>建筑</td><td></td></tr>
                            <tr><th>显示隐藏线</th><td>按规程</td><td></td></tr>
                        </table>
                    </div>
                    <div class="vscroll"><i class="up"></i><b class="thumb-props"></b><i class="down"></i></div>
                </div>
                <div class="pfoot"><a href="#">属性帮助</a><button disabled>应用</button></div>
                <svg class="pointer" viewBox="0 0 34 46"><circle cx="15" cy="15" r="15" fill="#db8f9f" fill-opacity=".75"/><path d="M15 15v24l6-5 5 11 4-2-5-11h7z" fill="#000" stroke="#fff" stroke-width=".5"/></svg>
            </section>

            <section class="browser">
                <h3><span>项目浏览器</span><small>- rac_basic_sample_project.rvt</small><button aria-label="关闭浏览器">✕</button></h3>
                <div class="btree">
                    <ul>
                        <li><div class="row"><button class="tg">−</button><i class="dash"></i><svg class="ticon" viewBox="0 0 16 16"><path d="M1 4V1h3M12 1h3v3M15 12v3h-3M4 15H1v-3" fill="none" stroke="#333"/><path d="M5 6l2-2h5v6l-2 2H5z" fill="#fff" stroke="#333"/></svg>视图 (all)</div>
                            <ul>
                                <li><div class="row"><button class="tg">−</button><i class="dash"></i>楼层平面 (Floor Plan)</div>
                                    <ul>
                                        <li><div class="row leaf"><i class="dash"></i><b>Level 1</b></div></li>
                                        <li><div class="row leaf"><i class="dash"></i>Level 2</div></li>
                                        <li><div class="row leaf"><i class="dash"></i>Site</div></li>
                                    </ul>
                                </li>
                                <li><div class="row"><button class="tg">+</button><i class="dash"></i>三维视图 (3D View)</div></li>
                                <li><div class="row"><button class="tg">+</button><i class="dash"></i>立面 (Building Elevation)</div></li>
                                <li><div class="row"><button class="tg">+</button><i class="dash"></i>剖面 (Building Section)</div></li>
                                <li><div class="row"><button class="tg">+</button><i class="dash"></i>剖面 (Wall Section)</div></li>
                                <li><div class="row"><button class="tg">+</button><i class="dash"></i>详图视图 (Detail)</div></li>
                                <li><div class="row"><button class="tg">−</button><i class="dash"></i>渲染 (Rendering)</div>
                                    <ul>
                                        <li><div class="row leaf"><i class="dash"></i>Approach</div></li>
                                        <li><div class="row leaf"><i class="dash"></i>From Yard</div></li>
                                        <li><div class="row leaf"><i class="dash"></i>Kitchen</div></li>
                                        <li><div class="row leaf"><i class="dash"></i>Living Room</div></li>
                                        <li><div class="row leaf"><i class="dash"></i>Section Perspective</div></li>
                                    </ul>
                                </li>
                                <li><div class="row"><button class="tg">−</button><i class="dash"></i>漫游 (Walkthrough)</div>
                                    <ul>
                                        <li><div class="row leaf"><i class="dash"></i>漫游 1</div></li>
                                    </ul>
                                </li>
                            </ul>
                        </li>
                        <li><div class="row leaf top"><i class="dash"></i><svg class="ticon" viewBox="0 0 16 16"><path d="M1 1h14v14H1z" fill="#dfe5ea" stroke="#333b45" stroke-width="1.500"/><path d="M1 3h14" stroke="#333b45" stroke-width="2"/><path d="M3 6h3v3H3zM8 7h5M8 9h5M4 12h2M8 12h5" stroke="#333b45" fill="none"/></svg>图例</div></li>
                        <li><div class="row"><button class="tg">+</button><i class="dash"></i><svg class="ticon" viewBox="0 0 16 16"><path d="M1 1h14v14H1zM1 7h14M6 4v11" fill="#fff" stroke="#333b45" stroke-width="1.500"/><path d="M1 3h14" stroke="#333b45" stroke-width="2"/></svg>明细表/数量</div></li>
                    </ul>
                    <div class="vscroll"><i class="up"></i><b class="thumb-tree"></b><i class="down"></i></div>
                </div>
            </section>
        </aside>

        <section class="view">
            <div class="canvas">
                <svg class="plan">
                    <defs>
                        <g id="chair"><path d="M26 -21L14 -22Q8 -21 3 -15L0 -11V11L3 15Q8 21 14 22L26 21z" fill="#d3a78f" stroke="#111"/><path d="M-1 -16V16M-3 -17V17M-5 -20l4 6M-6 20l5-6" stroke="#111" fill="none"/></g>
                        <g id="plate" fill="#fff" stroke="#111" stroke-width="1.300"><circle r="13"/><circle r="10"/></g>
                        <g id="star" stroke="#000" stroke-width="2"><path d="M-5 0H5M0-5V5M-4-4L4 4M4-4L-4 4"/></g>
                    </defs>
                    <!-- model coordinates are offset so the sheet starts at the canvas corner -->
                    <g transform="translate(-405 -194)">
                        <rect x="405" y="194" width="1496" height="813" fill="#fff"/>
                        <!-- terrain -->
                        <rect x="405" y="863" width="1361" height="144" fill="#293819"/>
                        <path d="M1224 863H1270L1282 890 1380 945 1440 997 1490 1003V1007H1080V966L1148 977 1180 918 1206 902z" fill="#2b311a"/>
                        <path d="M1212 863H1224L1248 932 1262 946 1361 1007H1140L1150 975 1200 940z" fill="#2a3311"/>
                        <path d="M405 863h200l-130 30-70 10z" fill="#2b3519"/>
                        <path d="M405 863.500h1361v144" fill="none" stroke="#000"/>
                        <rect x="686" y="990" width="563" height="17" fill="#fff"/>
                        <path d="M693 1006h37M957 1006h9M1236 1006h7" stroke="#000" stroke-width="2"/>
                        <!-- kitchen floor -->
                        <rect x="575" y="224" width="1206" height="606" fill="#d6cbb4"/>
                        <rect x="1790" y="592" width="53" height="244" fill="#d6cbb4"/>
                        <!-- chairs and tables -->
                        <use href="#chair" x="742" y="400"/><use href="#chair" x="742" y="484"/><use href="#chair" x="742" y="575"/><use href="#chair" x="742" y="659"/>
                        <g transform="matrix(-1 0 0 1 1628 0)"><use href="#chair" x="742" y="400"/><use href="#chair" x="742" y="484"/><use href="#chair" x="742" y="575"/><use href="#chair" x="742" y="659"/></g>
                        <g fill="#fff" stroke="#111">
                            <path d="M768.500 346.500h91v366h-91zM770.500 349.500h87v177h-87zM770.500 532.500h87v177h-87z"/>
                            <path d="M770.500 361.500h13v-12M857.500 361.500h-13v-12M770.500 514.500h13v12M857.500 514.500h-13v12M770.500 544.500h13v-12M857.500 544.500h-13v-12M770.500 697.500h13v12M857.500 697.500h-13v12"/>
                        </g>
                        <use href="#plate" x="784" y="401"/><use href="#plate" x="843" y="401"/>
                        <use href="#plate" x="784" y="484"/><use href="#plate" x="843" y="484"/>
                        <use href="#plate" x="784" y="574"/><use href="#plate" x="843" y="574"/>
                        <use href="#plate" x="784" y="657"/><use href="#plate" x="843" y="657"/>
                        <g fill="#fbfbdf" stroke="#111" stroke-width="1.500"><circle cx="800" cy="389" r="4.500"/><circle cx="800" cy="472" r="4.500"/><circle cx="800" cy="562" r="4.500"/><circle cx="800" cy="646" r="4.500"/><circle cx="828" cy="414" r="4.500"/><circle cx="828" cy="499" r="4.500"/><circle cx="828" cy="585" r="4.500"/><circle cx="830" cy="672" r="4.500"/><circle cx="813" cy="672" r="5" stroke-width="1"/><circle cx="813" cy="672" r="2" stroke-width="1"/></g>
                        <!-- counters -->
                        <g stroke="#111">
                            <path d="M1181.500 529.500h462v66h-462z" fill="#d4d6d3"/><path d="M1182.500 532.500h458v63" fill="none"/>
                            <path d="M1181.500 748.500h462v66h-462z" fill="#d4d6d3"/><path d="M1182.500 812.500h458v-64" fill="none"/>
                            <path d="M1369.500 535.500h85v57h-85zM1372.500 546.500h46v43h-46zM1421.500 546.500h30v43h-30z" fill="#fff"/>
                            <circle cx="1395.500" cy="560.500" r="5" fill="#fff"/><circle cx="1436.500" cy="560.500" r="5" fill="#fff"/>
                            <circle cx="1409" cy="542" r="2" fill="#fff"/><circle cx="1446" cy="542" r="2" fill="#fff"/>
                            <path d="M1417 540h4l-1 4h-4zM1423 540h4v4h-4z" fill="#fff" stroke-width="1.500"/><circle cx="1430" cy="542" r="2" fill="#fff"/><path d="M1419.500 542v23" fill="none" stroke-width="2"/>
                            <path d="M1193 544q4-1 6 4 2-5 6-3 2 4-3 8 4 3 4 8-4 4-7-2-3 5-6 3-3-4 2-9-5-5-2-9z" fill="#fff" stroke="#000" stroke-width="2"/>
                            <path d="M1316 596h6M1329 596h12M1345 596h3" stroke-width="1.500"/>
                        </g>
                        <!-- room cross lines -->
                        <path d="M807 219L1418 830M1342 218L730 830" stroke="#15150f" stroke-width="1.500"/>
                        <rect x="1371" y="754" width="82" height="54"/>
                        <!-- planter -->
                        <path d="M1028 478l19 4 18 13 11 17 3 17-4 19-11 18-17 11-19 4-20-4-18-13-10-17-3-18 4-19 11-17 17-11z" fill="#fff" stroke="#111" stroke-width="1.500"/>
                        <path d="M999 502l5-4 1 6zM998 528l4-3v5zM1014 577l4-2 1 4zM1040 510v2M1049 510l2 2h-3zM1022 515l-2 4M981 519l-2 2M1072 524l2 2M1064 532l2 3M1020 540v2M1018 551l3 2M1046 550h2M1030 562v1M994 508l-2 1M1072 543l-2 2M1004 543v1" fill="none" stroke="#111" stroke-width="1.500"/>
                        <g fill="#a99b6e" stroke="#1c1a10"><circle cx="1206.500" cy="507.500" r="14.500"/><circle cx="1274.500" cy="507.500" r="14.500"/><circle cx="1343" cy="507.500" r="14.500"/><circle cx="1479" cy="507.500" r="14.500"/><circle cx="1548.500" cy="507.500" r="14.500"/><circle cx="1618" cy="507.500" r="14.500"/></g>
                        <!-- curtain walls -->
                        <path d="M569 208h1202v11H569z"/>
                        <path d="M572 211h1198" stroke="#22bcc4" stroke-width="2"/>
                        <path d="M564 213h11v626h-11z"/><path d="M567 216v620" stroke="#22bcc4" stroke-width="2"/>
                        <path d="M564 829h1207v11H564z"/><path d="M574 838h1195" stroke="#22bcc4" stroke-width="2"/>
                        <path d="M711 209v4M864 209v4M1017 209v4M1170 209v4M1322 209v4M1475 209v4M1628 209v4M711 836v4M864 836v4M1017 836v4M1170 836v4M1322 836v4M1475 836v4M1628 836v4M565 371h4M565 525h4M565 677h4" stroke="#000" stroke-width="5"/>
                        <!-- neighbouring rooms -->
                        <rect x="1771" y="225" width="130" height="148" fill="#227093"/>
                        <path d="M1771 204h130v4h-130zM1771 373h130v3h-130z" fill="#b5673f"/>
                        <path d="M1771 210h130v12h-130z" fill="#ffe680"/>
                        <path d="M1770 203.500h131M1771 208.500h130M1771 209.500h130M1771 222.500h130M1771 224.500h130M1770.500 203v199M1771 372.500h130M1771 376.500h130" stroke="#111" fill="none"/>
                        <path d="M1771 223.500h130" stroke="#6b6439"/>
                        <rect x="1780" y="394" width="121" height="183" fill="#43c543"/>
                        <path d="M1771 376h10v20h-10z" fill="#fff"/><path d="M1776 379h125v12h-110v4h-15z" fill="#ffe680" stroke="#111"/><path d="M1791 392.500h110" stroke="#111" stroke-width="3"/>
                        <path d="M1771.500 375v21" stroke="#b5673f" stroke-width="2"/>
                        <path d="M1791 394L1901 504M1791 540L1901 430M1780 577h121" stroke="#0c200c" stroke-width="1.500"/>
                        <path d="M1791 578h110v14h-110zM1844 578h14v258h-14z" fill="#e6e6e6"/>
                        <path d="M1858 594h43v21h-43zM1858 676h43v10h-43zM1858 747h43v89h-43z" fill="#ab7762"/>
                        <path d="M1791 592.500h52.500V836M1857.500 836V592.500H1901M1858 594.500h43M1858 614.500h43M1858 675.500h43M1858 686.500h43M1858 746.500h43M1858 616l43 43M1901 797l-38 38" stroke="#111" fill="none"/>
                        <path d="M1791 836.500h110M1791 838.500h110" stroke="#222"/>
                        <!-- garden -->
                        <rect x="1791" y="863" width="110" height="144" fill="#c6e785"/>
                        <path d="M1791 863.500h110" stroke="#111"/>
                        <rect x="1865.500" y="870.500" width="40" height="41" fill="#fff" stroke="#111"/>
                        <path d="M1815 937l3-2M1832 934l1 3M1838 902h3M1890 949l1 3M1823 964h4M1879 964h3M1870 967l2-3M1796 985h3M1818 990l1 3M1846 998l2 3M1815 1005h4M1878 996l1-2M1892 996v2M1879 1005h3M1861 943h3M1806 880l4 2M1843 876l3 1M1822 890l-2 3M1852 889h3M1861 939l2-1M1808 910h2M1898 912l3 2M1898 984h3M1899 885v3" stroke="#111" stroke-width="1.500" fill="none"/>
                        <!-- partition -->
                        <path d="M1766 863h5v144h-5z" fill="#fff"/>
                        <path d="M1771 573h20v434h-20z" fill="#fff"/><path d="M1776.500 573.500h12V1008h-12z" fill="#ffe680" stroke="#111" stroke-width="2"/>
                        <path d="M1772.500 573v434" stroke="#b5673f" stroke-width="2"/><path d="M1770.500 568v439M1790.500 573v434M1770 572.500h21" stroke="#111"/>
                        <!-- fridge and wash unit -->
                        <path d="M1762.500 603.500h5v46h-5z" fill="#d6cbb4" stroke="#111" stroke-width="1.500"/>
                        <rect x="1767" y="597" width="59" height="58"/>
                        <path d="M1768.500 657.500h62v92h-62z" fill="#fff" stroke="#111" stroke-width="1.500"/><path d="M1825.500 658v91M1828.500 658v91" stroke="#111"/>
                        <!-- double door -->
                        <path d="M1683.500 396.500h87v5h-87zM1683.500 567.500h87v5h-87z" fill="#d6cbb4" stroke="#111"/>
                        <path d="M1683 397l2 22 10 22 14 18 18 14 21 8 22 3-22 3-21 9-18 14-14 19-9 20-3 23" fill="none" stroke="#111"/>
                        <!-- grids -->
                        <path d="M405 195.500h1496M405 224.500h1365M405 835.500h160M405 731.500h1496" stroke="#000"/>
                        <path d="M432 529.500h129M594 529.500h32M658 529.500h202M885 529.500h129M1046 529.500h32M1111 529.500h583M1726 529.500h31M1790 529.500h111" stroke="#000"/>
                        <path d="M569.500 194v766M1386.500 194v728.500h474V1007" fill="none" stroke="#000"/>
                        <path d="M874.500 194v97M874.500 323v33M874.500 388v129M874.500 550v32M874.500 614v130M874.500 776v32M874.500 840v120" stroke="#000"/>
                        <path d="M1180.500 194v97M1180.500 323v33M1180.500 388v129M1180.500 614v130M1180.500 840v120" stroke="#000"/>
                        <path d="M1485.500 194v97M1485.500 323v33M1485.500 388v129M1485.500 550v32M1485.500 614v130M1485.500 776v32M1485.500 840v120" stroke="#000"/>
                        <path d="M1791.500 194v62M1791.500 289v32M1791.500 353v130M1791.500 515v32M1791.500 580v129M1791.500 741v8" stroke="#000"/>
                        <use href="#star" x="1073" y="486"/><use href="#star" x="1864" y="467"/>
                        <!-- room tags -->
                        <path d="M1051.500 348.500h163v61h-163z" fill="none" stroke="#111"/>
                        <rect x="1603.500" y="457.500" width="122" height="61" rx="29" fill="none" stroke="#111"/>
                        <g class="tag">
                            <text x="1131" y="314" text-anchor="middle">Kitchen &amp; Dining</text>
                            <text x="1131" y="393" text-anchor="middle">101</text>
                            <text x="1132" y="472" text-anchor="middle">73 m²</text>
                            <text x="1664" y="502" text-anchor="middle">105</text>
                            <text x="1798" y="504">Mech</text>
                        </g>
                        <text class="watermark" x="1607" y="977">微信公众号：BIM志</text>
                    </g>
                </svg>
                <div class="mdi">
                    <button aria-label="最小化视图"><svg viewBox="0 0 14 14"><path d="M1 8h12v3H1z" fill="#fff" stroke="#555"/></svg></button>
                    <button aria-label="还原视图"><svg viewBox="0 0 14 14"><path d="M5 1h8v8H5zM2 4h8v9H2z" fill="#fff" stroke="#555" stroke-width="1.500"/><path d="M5 8h2v2H5z" fill="#333"/></svg></button>
                    <button aria-label="关闭视图"><svg viewBox="0 0 14 14"><path d="M2 2h3l2 3 2-3h3L9 7l3 5H9L7 9l-2 3H2l3-5z" fill="#fff" stroke="#555" stroke-width="1.500"/></svg></button>
                </div>
            </div>
            <div class="vscroll vs-canvas"><i class="up"></i><b></b><i class="down"></i></div>
            <div class="viewbar">
                <button class="scale">1 : 100</button>
                <button aria-label="详细程度"><svg><use href="#v-detail"/></svg></button>
                <button aria-label="视觉样式"><svg><use href="#v-cube"/></svg></button>
                <button aria-label="日光路径"><svg><use href="#v-sun"/></svg></button>
                <button aria-label="阴影"><svg><use href="#v-shadow"/></svg></button>
                <button aria-label="裁剪视图"><svg><use href="#v-crop"/></svg></button>
                <button aria-label="显示裁剪区域"><svg><use href="#v-cropshow"/></svg></button>
                <button aria-label="临时隐藏"><svg><use href="#v-glasses"/></svg></button>
                <button aria-label="显示隐藏图元"><svg><use href="#v-bulb"/></svg></button>
                <button aria-label="临时视图属性"><svg><use href="#v-temp"/></svg></button>
                <button aria-label="分析模型"><svg><use href="#v-ana"/></svg></button>
                <button aria-label="显示约束"><svg><use href="#v-lock"/></svg></button>
                <div class="hscroll"><i class="left"></i><b></b><i class="right"></i></div>
            </div>
            <div class="grip"></div>
        </section>
    </main>

    <footer class="status">
        <p>请选择要对齐的线或点参照。</p>
        <div class="worksets">
            <svg><use href="#s-people"/></svg>
            <select disabled aria-label="工作集"><option></option></select>
            <svg><use href="#s-edit"/></svg><span class="count">:0</span>
            <svg><use href="#s-opt"/></svg>
            <svg><use href="#s-add"/></svg>
            <select disabled aria-label="设计选项"><option>主模型</option></select>
        </div>
        <div class="selects">
            <button aria-label="选择链接"><svg><use href="#s-link"/></svg></button>
            <button aria-label="选择基线图元"><svg><use href="#s-under"/></svg></button>
            <button aria-label="选择锁定图元"><svg><use href="#s-pin"/></svg></button>
            <button aria-label="按面选择图元"><svg><use href="#s-face"/></svg></button>
            <button aria-label="选择时拖拽图元"><svg><use href="#s-drag"/></svg></button>
            <button aria-label="后台进程"><svg><use href="#s-bg"/></svg></button>
            <button aria-label="过滤器"><svg><use href="#s-filter"/></svg></button>
            <span>:0</span>
        </div>
    </footer>

    <footer class="taskbar">
        <div class="pins">
            <button aria-label="开始"><svg viewBox="0 0 20 20"><path d="M2 4l7-1v6H2zM10 3l8-1v7h-8zM2 11h7v6l-7-1zM10 11h8v7l-8-1z" fill="#fff"/></svg></button>
            <button aria-label="Cortana"><svg viewBox="0 0 20 20"><circle cx="10" cy="10" r="6.500" fill="none" stroke="#fff" stroke-width="2"/></svg></button>
            <button aria-label="任务视图"><svg viewBox="0 0 20 20"><path d="M3 2v2h9V2M3 7h9v6H3zM3 18v-2h9v2M16 2v4M16 10v8" fill="none" stroke="#fff" stroke-width="1.400"/><path d="M15 7h3v2h-3z" fill="#fff"/></svg></button>
            <button aria-label="Android"><svg viewBox="0 0 20 20"><path d="M3 10q0-6 7-6t7 6q1 8-7 8t-7-8z" fill="#82b524"/><path d="M5 2l2 3M15 2l-2 3" stroke="#82b524" stroke-width="1.500"/><path d="M3 10h14" stroke="#55801a"/><circle cx="7" cy="7" r="1" fill="#fff"/><circle cx="13" cy="7" r="1" fill="#fff"/></svg></button>
        </div>
        <button class="task"><svg viewBox="0 0 20 20"><g fill="#73bf45"><path d="M10 9Q8 1 5 2 2 3 3 6q2 3 7 3zM10 9q0-7 4-8 4 1 3 4-2 3-7 4zM10 9Q4 8 2 10q-1 4 3 5 3-1 5-6zM10 9q7-1 8 2 0 4-3 4-3-1-5-6z"/></g><path d="M10 9q0 6 3 10" fill="none" stroke="#4c8c2a" stroke-width="2"/></svg>00 BIM志 - Clover</button>
        <div class="pins apps">
            <button aria-label="AMD"><svg viewBox="0 0 20 20"><path d="M1 1h18v18H1z" fill="#000"/><circle cx="10" cy="9" r="4" fill="none" stroke="#c65a2b" stroke-width="1.500"/><path d="M2 9h16" stroke="#ddd" stroke-dasharray="2 1"/></svg></button>
            <button aria-label="浏览器"><svg viewBox="0 0 20 20"><path d="M10 2a8 8 0 0 1 7 4l-7 4z" fill="#f6c21c"/><path d="M17 6a8 8 0 0 1-3 11l-4-7z" fill="#38b54a"/><path d="M14 17a8 8 0 0 1-11-3l7-4z" fill="#2b9be6"/><path d="M3 14a8 8 0 0 1 0-9l7 5z" fill="#a13ec9"/><path d="M3 5a8 8 0 0 1 7-3v8z" fill="#ee3a4c"/><circle cx="10" cy="10" r="3" fill="#fff"/></svg></button>
            <button aria-label="书签"><svg viewBox="0 0 20 20"><path d="M3 2h14v13h-4l-3 4-3-4H3z" fill="#148df0"/><path d="M10 3l1.500 3.500 4 .5-3 2.500 1 4L10 11l-3.500 2.500 1-4-3-2.500 4-.5z" fill="#fff"/></svg></button>
            <button aria-label="云盘"><svg viewBox="0 0 20 20"><rect x="1" y="1" width="18" height="18" rx="3" fill="#fff"/><g fill="none" stroke-width="1.800"><circle cx="10" cy="7" r="3" stroke="#2aa1e8"/><circle cx="7" cy="12" r="3" stroke="#2a72e8"/><circle cx="13" cy="12" r="3" stroke="#e8505a"/></g></svg></button>
            <button aria-label="微信"><svg viewBox="0 0 20 20"><ellipse cx="8" cy="8" rx="6.500" ry="5.500" fill="#84d23e"/><ellipse cx="13" cy="13" rx="5.500" ry="4.500" fill="#f4f4f4"/><circle cx="6" cy="7" r="1"/><circle cx="10" cy="7" r="1"/><circle cx="11" cy="12" r=".8"/><circle cx="15" cy="12" r=".8"/></svg></button>
            <button aria-label="搜索"><svg viewBox="0 0 20 20"><circle cx="12" cy="7" r="4.500" fill="none" stroke="#f07a12" stroke-width="2.500"/><path d="M9 11l-6 7" stroke="#f07a12" stroke-width="3"/></svg></button>
            <button aria-label="工具"><svg viewBox="0 0 20 20"><path d="M1 1h18v18H1z" fill="#f7eedc"/><path d="M4 2l5 6-6 9M10 3h6M12 3v7l-4 8M9 10h8l2 8" stroke="#b4713a" stroke-width="2" fill="none"/><path d="M9 12h9v6H9z" fill="#e9924f"/></svg></button>
            <button aria-label="CAD"><svg viewBox="0 0 20 20"><path d="M1 1h18v18H1z" fill="#1d62b4" stroke="#8a9db5"/><path d="M7 6H3v7h4M9 13V6h3v3H9M14 6h3v7h-3z" fill="none" stroke="#dceaff" stroke-width="1.300"/></svg></button>
            <button aria-label="录屏"><svg viewBox="0 0 20 20"><path d="M2 3v11M2 5h6M4 7h5v6H4zM6 3v12M11 5h3v8M10 9h6M18 5v5" fill="none" stroke="#e6e6e6" stroke-width="1.600"/></svg></button>
            <button aria-label="Wave"><svg viewBox="0 0 20 20"><rect x="1" y="1" width="18" height="18" rx="2" fill="#1aa0ea"/><path d="M4 9v2q0 3 2 3 3 0 4-6-1 6 1 6 3 0 4-6-1 6 2 6" fill="none" stroke="#fff" stroke-width="2"/></svg></button>
        </div>
        <button class="task current"><span class="rv"><svg><use href="#i-revit"/></svg></span>Autodesk Revit 201...</button>
        <div class="tray">
            <svg viewBox="0 0 20 20"><path d="M2 3l8-2 7 2v8q-1 6-7 8-7-3-8-8z" fill="#f79a1f"/><path d="M10 4q4 4 2 10-6 2-6-3 3-2 4-7z" fill="#fff"/><circle cx="15" cy="15" r="4" fill="#27ae60"/></svg>
            <svg viewBox="0 0 20 20"><path d="M4 2h12v3h3v10h-3v3H4v-3H1V5h3z" fill="#18c418"/><circle cx="10" cy="10" r="5" fill="#d42323"/><path d="M10 5v10M5 10h10" stroke="#222b77" stroke-width="2"/></svg>
            <svg viewBox="0 0 20 20"><path d="M1 1h18v18H1z" fill="#f7e9d6"/><path d="M4 8l12-3M11 2L7 18M4 15h4M12 10q5-2 4 3" stroke="#a4501e" stroke-width="2" fill="none"/></svg>
            <svg viewBox="0 0 20 20"><path d="M6 1h6v5H6zM5 6h8v12H5z" fill="none" stroke="#fff" stroke-width="1.400"/><path d="M11 15l2 3 5-6" fill="none" stroke="#fff"/></svg>
            <svg viewBox="0 0 20 20"><path d="M2 2h16v16H2z" fill="#fff"/><path d="M3 8h14v9H3z" fill="#f8a02c"/><path d="M3 5h12" stroke="#f08c1e" stroke-width="2"/><circle cx="17" cy="3" r="3" fill="#ec4d37"/></svg>
            <svg viewBox="0 0 20 20"><path d="M3 2q0 9 6 12 5 1 5-3Q12 4 3 2zM6 14l-3 4h8M12 4q6 3 6 12" fill="none" stroke="#ccc" stroke-width="1.400"/><path d="M8 7l3 4" stroke="#fff" stroke-width="2"/></svg>
            <svg viewBox="0 0 20 20"><path d="M3 18Q3 6 16 4M7 18q0-8 9-10M11 18q0-5 5-6" fill="none" stroke="#ddd" stroke-width="1.500"/><circle cx="15" cy="17" r="1.500" fill="#fff"/></svg>
            <svg viewBox="0 0 20 20"><path d="M2 8h3l4-4v12l-4-4H2z" fill="none" stroke="#fff" stroke-width="1.300"/><path d="M12 7q2 3 0 6M14 5q4 5 0 10M16 3q6 7 0 14" fill="none" stroke="#fff"/></svg>
            <span class="ime">中</span>
            <span class="clock">15:17</span>
            <svg viewBox="0 0 20 20"><path d="M2 2h16v13h-5l-3 3v-3H2z" fill="none" stroke="#fff" stroke-width="1.400"/></svg>
        </div>
    </footer>
</body>
</html>
```

FILE: styles.css
```css
* {
    box-sizing: border-box;
}

html,
body {
    height: 100%;
}

body {
    margin: 0;
    display: flex;
    flex-direction: column;
    overflow: hidden;
    background-color: #f7f7f7;
    color: #222;
    font-family: "Noto Sans", "Noto Sans CJK SC", sans-serif;
    font-size: 12px;
    line-height: 16px;
}

h1,
h2,
h3,
p,
ul {
    margin: 0;
    padding: 0;
    font-size: 12px;
    font-weight: 400;
}

button,
input,
select {
    font: inherit;
    color: inherit;
}

button {
    display: inline-flex;
    align-items: center;
    justify-content: center;
    padding: 0;
    border: 0;
    background: none;
}

svg {
    display: block;
    flex: none;
}

a {
    color: inherit;
    text-decoration: none;
}

.sprite {
    position: absolute;
    width: 0;
    height: 0;
}

.caret {
    flex: none;
    width: 0;
    border: 3px solid transparent;
    border-top: 4px solid #333;
    border-bottom: 0;
}

.caret.dim {
    border-top-color: #888;
}

.on {
    background: linear-gradient(#a9d3f5, #cde5fa);
    outline: 1px solid #2467a8;
    outline-offset: -1px;
}

/* title bar */
.titlebar {
    flex: none;
    display: flex;
    height: 28px;
    background-color: #d3d6d2;
}

.logo {
    width: 16px;
    height: 20px;
    margin: 2px 0 0 5px;
}

.title {
    flex: 1;
    display: flex;
    justify-content: center;
    gap: 24px;
    line-height: 24px;
    color: #333;
}

.infocenter {
    display: flex;
    align-items: center;
    height: 22px;
}

.infocenter svg {
    width: 20px;
    height: 20px;
}

.infocenter button {
    width: 24px;
}

.infocenter .caret-right {
    width: 5px;
    margin-right: 4px;
    border: 4px solid transparent;
    border-left: 5px solid #444;
    border-right: 0;
}

.search {
    width: 180px;
    height: 22px;
    padding: 0 3px;
    border: 1px solid #000;
    background-color: #fff;
    font-style: italic;
}

.search::placeholder {
    color: #666;
}

.infocenter .login {
    width: 106px;
    justify-content: flex-start;
    gap: 2px;
    margin-left: 2px;
}

.infocenter .exchange {
    margin: 0 8px 0 6px;
}

.infocenter .help {
    margin-right: 6px;
    width: 28px;
}

.winbtns {
    display: flex;
    padding-left: 18px;
}

.winbtns button {
    width: 24px;
    height: 24px;
}

.winbtns svg {
    width: 16px;
    height: 16px;
}

/* ribbon tabs */
.tabs {
    flex: none;
    display: flex;
    height: 20px;
    background-color: #d3d6d2;
    line-height: 21px;
    white-space: nowrap;
}

.tabs a {
    padding: 0 10px;
    color: #333;
}

.tabs .file {
    padding: 0 2px 0 1px;
    color: #fff;
}

.tabs .active {
    background-color: #f7f7f7;
}

.tab-toggle {
    margin-left: 20px;
}

.tab-toggle svg {
    width: 24px;
    height: 14px;
}

/* ribbon panels */
.ribbon {
    flex: none;
    display: flex;
    height: 95px;
    background-color: #f7f7f7;
}

.panel {
    display: flex;
    flex-direction: column;
    border-right: 1px solid #dcdcdc;
}

.panel h2 {
    display: flex;
    align-items: center;
    justify-content: center;
    gap: 6px;
    height: 18px;
    white-space: nowrap;
}

.tools {
    flex: 1;
    display: flex;
    justify-content: center;
    padding-top: 4px;
}

.panel svg {
    width: 18px;
    height: 18px;
}

.big {
    flex-direction: column;
    justify-content: flex-start;
    gap: 6px;
    white-space: nowrap;
}

.panel .big svg {
    width: 32px;
    height: 32px;
    margin-top: 1px;
}

.big.off {
    color: #aaa;
}

.col {
    display: flex;
    flex-direction: column;
}

.col button {
    height: 24px;
    gap: 4px;
    justify-content: flex-start;
}

.stack {
    flex-direction: column;
    align-items: center;
    justify-content: flex-start;
    gap: 2px;
}

.stack button {
    height: 34px;
    width: 38px;
    gap: 6px;
}

.panel .i28 {
    width: 29px;
    height: 29px;
}

.panel .i30 {
    width: 31px;
    height: 31px;
}

.p-select {
    width: 51px;
}

.panel.p-select .big svg {
    width: 26px;
    height: 26px;
    margin: 5px 0 2px;
}

.p-props {
    width: 45px;
}

.p-clip {
    width: 76px;
}

.p-clip .tools {
    gap: 10px;
    padding-left: 3px;
}

.p-clip .big {
    gap: 4px;
}

.p-geo {
    width: 171px;
}

.p-geo .tools {
    gap: 6px;
    justify-content: flex-start;
    padding-left: 6px;
}

.p-geo .wide {
    width: 97px;
}

.p-geo .wide .caret {
    margin-left: 4px;
}

.p-view {
    width: 65px;
}

.p-view .tools {
    gap: 9px;
    justify-content: flex-start;
    padding-left: 5px;
}

.p-measure {
    width: 56px;
}

.p-measure .stack button {
    width: 48px;
}

.p-create {
    width: 82px;
}

.quad {
    display: grid;
    grid-template-columns: 38px 38px;
    grid-auto-rows: 36px;
}

.p-master {
    width: 144px;
}

.p-master .tools {
    gap: 22px;
}

.p-modify {
    width: 239px;
    border: 0;
}

.p-modify .tools {
    justify-content: flex-start;
    padding-left: 3px;
}

.eight {
    display: grid;
    grid-template-columns: repeat(4, 39px);
    grid-auto-rows: 35px;
}

.eight .on {
    width: 38px;
}

.panel .eight svg {
    width: 32px;
    height: 32px;
}

.nine {
    display: grid;
    grid-template-columns: repeat(3, 25px);
    grid-auto-rows: 24px;
    padding-left: 2px;
}

/* quick access toolbar */
.qat {
    flex: none;
    display: flex;
    align-items: center;
    height: 25px;
    padding-left: 5px;
    background-color: #d3d6d2;
}

.qat button {
    width: 24px;
    height: 22px;
}

.qat svg {
    width: 18px;
    height: 18px;
}

.qat .caret {
    margin: 0 3px;
}

.sep {
    width: 1px;
    height: 22px;
    margin: 0 3px;
    background-color: #b9bcb8;
}

.qat .letter {
    font-size: 18px;
    font-weight: 700;
}

.qat .more {
    width: 20px;
}

.more .caret {
    width: 8px;
    border-width: 4px;
    position: relative;
}

.more .caret::before {
    content: "";
    position: absolute;
    left: -4px;
    top: -7px;
    width: 8px;
    height: 1px;
    background-color: #333;
}

/* options bar */
.options {
    flex: none;
    display: flex;
    align-items: center;
    height: 24px;
    padding: 2px 0 0 9px;
    color: #000;
}

.options label {
    display: flex;
    align-items: center;
    margin-right: 5px;
}

.options label:first-child {
    margin-right: 14px;
}

.options input {
    appearance: none;
    width: 13px;
    height: 13px;
    margin: 0 3px 0 0;
    border: 1px solid #222;
    background-color: #fff;
}

select {
    appearance: none;
    border: 1px solid #c3c3c8;
    border-radius: 0;
    padding: 0 3px;
    background: #e4e3e7 url("data:image/svg+xml,%3Csvg xmlns='http://www.w3.org/2000/svg' width='10' height='6'%3E%3Cpath d='M1 1l4 4 4-4' fill='none' stroke='%23666'/%3E%3C/svg%3E") no-repeat right 4px center;
    color: #000;
    opacity: 1;
}

.options select {
    width: 101px;
    height: 21px;
}

/* left docks */
main {
    flex: 1;
    min-height: 0;
    display: flex;
    border-bottom: 1px solid #8e908e;
}

aside {
    flex: none;
    width: 399px;
    display: flex;
    flex-direction: column;
    background-color: #f5f4f6;
    color: #000;
}

aside h3 {
    display: flex;
    align-items: center;
    height: 18px;
    padding: 0 4px;
    background-color: #bccddb;
    font-size: 13px;
}

aside h3 small {
    margin-left: 4px;
    font-size: 11px;
}

aside h3 button {
    margin-left: auto;
    width: 13px;
    height: 16px;
    font-size: 13px;
}

.props {
    position: relative;
    padding-bottom: 6px;
}

.type-selector {
    width: 395px;
    height: 73px;
    margin: 3px 0 0 2px;
    justify-content: flex-start;
    border: 1px solid #1d5e9e;
    background: linear-gradient(#d3e8fe, #c9e8fd 60%, #c6eaf1);
    text-align: left;
    color: #333;
    line-height: 15px;
}

.thumb {
    display: flex;
    align-items: center;
    justify-content: center;
    width: 66px;
    height: 66px;
    margin: 0 3px 0 2px;
    border: 1px solid #bfd2e2;
}

.thumb svg {
    width: 34px;
    height: 34px;
}

.type-selector .caret {
    margin-left: auto;
    margin-right: 2px;
}

.instance {
    display: flex;
    height: 27px;
    padding: 1px 0 0 2px;
}

.instance select {
    width: 312px;
    height: 25px;
}

.instance button {
    flex: 1;
    gap: 5px;
    padding: 0 4px 3px 0;
}

.instance svg {
    width: 17px;
    height: 17px;
}

.plist {
    display: flex;
    height: 271px;
    margin: 0 2px;
    overflow: hidden;
    background-color: #fff;
}

.prows {
    flex: 1;
}

.group {
    display: flex;
    align-items: center;
    justify-content: space-between;
    height: 19px;
    padding: 0 6px 0 2px;
    background-color: #dbddda;
}

.group svg {
    width: 8px;
    height: 10px;
}

.prows table {
    width: 100%;
    border-collapse: collapse;
    table-layout: fixed;
}

.prows th,
.prows td {
    height: 20px;
    padding: 0 0 0 2px;
    border: 1px dotted #777;
    border-width: 0 1px 1px 0;
    font-weight: 400;
    line-height: 18px;
    text-align: left;
}

.prows th {
    width: 183px;
    padding-left: 10px;
}

.prows td:last-child {
    width: 12px;
}

.prows td input {
    display: block;
    width: 182px;
    height: 19px;
    margin-left: -2px;
    padding: 0 5px;
    border: 1px solid #000;
}

.prows td button {
    display: block;
    width: 180px;
    height: 18px;
    margin-left: -1px;
    border: 1px solid #aaa;
    border-width: 1px 2px 2px 1px;
    background-color: #e4e3e5;
    line-height: 15px;
}

.prows .dim {
    color: #858585;
}

.vscroll {
    flex: none;
    display: flex;
    flex-direction: column;
    width: 16px;
    background-color: #f5f4f6;
}

.vscroll i,
.hscroll i {
    flex: none;
    width: 7px;
    height: 7px;
    border: 2px solid #555;
    border-width: 2px 0 0 2px;
}

.vscroll .up {
    margin: 7px 4px 3px;
    transform: rotate(45deg);
}

.vscroll .down {
    margin: auto 4px 7px;
    transform: rotate(225deg);
}

.vscroll b {
    background-color: #cccfcc;
}

.thumb-props {
    height: 73px;
}

.thumb-tree {
    height: 212px;
}

.pfoot {
    display: flex;
    align-items: center;
    justify-content: space-between;
    padding: 1px 4px 0;
    height: 23px;
}

.pfoot a {
    color: #0a63c2;
    text-decoration: underline;
}

.pfoot button {
    width: 73px;
    height: 19px;
    border: 1px solid #b5b8b5;
    background-color: #cccfcc;
    color: #888;
}

.pointer {
    position: absolute;
    right: 26px;
    top: 57px;
    width: 34px;
    height: 46px;
}

.browser {
    flex: 1;
    min-height: 0;
    display: flex;
    flex-direction: column;
}

.browser h3 {
    flex: none;
}

.btree {
    flex: 1;
    min-height: 0;
    display: flex;
    margin: 2px 2px 0 1px;
    border: 1px solid #777;
    border-width: 2px 0 0 1px;
    background-color: #fff;
    overflow: hidden;
}

.btree > ul {
    flex: 1;
}

.btree ul {
    list-style: none;
}

.btree ul ul {
    margin-left: 20px;
}

.btree li {
    position: relative;
}

.btree li::before {
    content: "";
    position: absolute;
    left: 8px;
    top: 0;
    height: 100%;
    border-left: 1px dotted #999;
}

.btree li:last-child::before {
    height: 10px;
}

.row {
    position: relative;
    display: flex;
    align-items: center;
    height: 20px;
    padding-left: 4px;
    white-space: nowrap;
}

.tg {
    width: 9px;
    height: 9px;
    border: 1px solid #8c8c8c;
    background-color: #fff;
    color: #234;
    font-size: 9px;
    line-height: 7px;
}

.dash {
    width: 10px;
    margin-right: 3px;
    border-top: 1px dotted #999;
}

.leaf {
    padding-left: 8px;
}

.leaf .dash {
    width: 15px;
}

.btree > ul > li > .row .dash {
    width: 7px;
    margin-right: 0;
}

.btree .top .dash.dash {
    width: 12px;
}

.ticon {
    width: 16px;
    height: 16px;
    margin-right: 6px;
}

.row b {
    margin-left: -3px;
    padding: 2px 3px;
    background-color: #e4e3e5;
}

/* drawing view */
.view {
    flex: 1;
    min-width: 0;
    display: grid;
    grid-template: minmax(0, 1fr) 19px / minmax(0, 1fr) 19px;
    margin: 0 0 0 4px;
    border: 2px solid #7d7f7d;
    border-width: 2px 0 0 2px;
    background-color: #f5f4f6;
}

.canvas {
    position: relative;
    overflow: hidden;
    background-color: #fff;
}

.plan {
    width: 100%;
    height: 100%;
}

.tag {
    font-family: "Liberation Sans", sans-serif;
    font-size: 43px;
}

.watermark {
    font-size: 24px;
    font-family: "Liberation Serif", "Noto Sans CJK SC", serif;
    fill: #f00;
}

.mdi {
    position: absolute;
    top: 7px;
    right: 2px;
    display: flex;
    gap: 4px;
}

.mdi svg {
    width: 14px;
    height: 14px;
}

.vs-canvas {
    width: 19px;
}

.vs-canvas .up,
.vs-canvas .down {
    margin-left: 4px;
}

.vs-canvas b {
    width: 15px;
    height: 17px;
    margin: 381px 0 0 1px;
}

.viewbar {
    display: flex;
    align-items: center;
    padding: 0 0 2px 17px;
}

.viewbar button {
    width: 21px;
}

.viewbar svg {
    width: 17px;
    height: 17px;
}

.viewbar .scale {
    width: 60px;
    padding-right: 12px;
    font-family: "DejaVu Sans Mono", monospace;
    font-size: 10px;
    white-space: nowrap;
}

.hscroll {
    flex: 1;
    display: flex;
    align-items: center;
}

.hscroll .left {
    margin-left: 4px;
    transform: rotate(-45deg);
}

.hscroll .right {
    margin: 0 6px 0 auto;
    transform: rotate(135deg);
}

.hscroll b {
    width: 17px;
    height: 15px;
    margin-left: 48%;
    background-color: #cccfcc;
}

.grip {
    margin: 6px 4px 3px 6px;
    background: radial-gradient(circle at 1px 1px, #aaa 1px, transparent 2px) 0 0 / 4px 4px;
    clip-path: polygon(100% 0, 100% 100%, 0 100%);
}

/* status bar */
.status {
    flex: none;
    display: grid;
    grid-template-columns: 1fr 549px 424px;
    align-items: center;
    height: 23px;
    background-color: #d3d6d2;
    color: #000;
}

.status p {
    padding-left: 2px;
}

.status svg {
    width: 18px;
    height: 18px;
}

.worksets {
    display: flex;
    align-items: center;
    gap: 8px;
}

.worksets select {
    width: 204px;
    height: 19px;
    background-color: #fff;
    border-color: #c8c8ce;
    color: #777;
}

.worksets .count {
    margin: 0 14px 0 -6px;
}

.selects {
    display: flex;
    align-items: center;
    justify-content: flex-end;
    padding-right: 66px;
}

.selects button {
    width: 25px;
}

/* task bar */
.taskbar {
    flex: none;
    display: flex;
    height: 30px;
    background-color: #101713;
    color: #fff;
}

.taskbar svg {
    width: 18px;
    height: 18px;
}

.pins {
    display: flex;
}

.pins button {
    width: 37px;
}

.apps {
    padding: 0 1px 0 4px;
}

.task {
    width: 152px;
    margin-left: 4px;
    padding: 0 4px;
    justify-content: flex-start;
    gap: 3px;
    border-bottom: 2px solid #6fb0e6;
    white-space: nowrap;
}

.current {
    width: 160px;
    margin-left: 0;
    padding: 0 8px;
    background-color: #424744;
}

.rv {
    padding: 0 1px;
    background-color: #dbe6f0;
}

.rv svg {
    width: 14px;
    height: 16px;
}

.tray {
    display: flex;
    align-items: center;
    gap: 6px;
    margin-left: auto;
    padding-right: 24px;
}

.ime {
    width: 18px;
    font-size: 14px;
    text-align: center;
}

.clock {
    width: 34px;
    margin: 0 10px 0 4px;
}
```
